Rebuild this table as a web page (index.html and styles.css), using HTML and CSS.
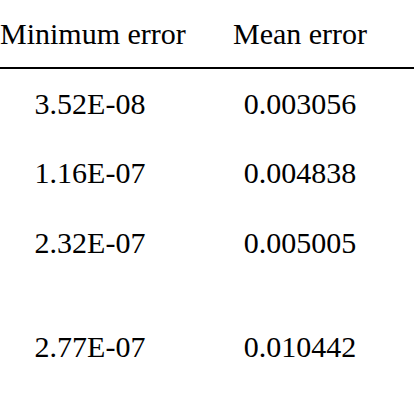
FILE: index.html
```html
<!DOCTYPE html>
<html lang="en">

<head>
    <meta charset="UTF-8">
    <meta name="viewport" content="width=device-width, initial-scale=1.0">
    <title>Error table</title>
    <link rel="stylesheet" href="styles.css">
</head>

<body>
    <div class="table">
        <div class="row head">
            <div class="cell">Minimum error</div>
            <div class="cell">Mean error</div>
        </div>
        <div class="row">
            <div class="cell">3.52E-08</div>
            <div class="cell">0.003056</div>
        </div>
        <div class="row">
            <div class="cell">1.16E-07</div>
            <div class="cell">0.004838</div>
        </div>
        <div class="row">
            <div class="cell">2.32E-07</div>
            <div class="cell">0.005005</div>
        </div>
        <div class="row tall">
            <div class="cell">2.77E-07</div>
            <div class="cell">0.010442</div>
        </div>
    </div>
</body>

</html>
```

FILE: styles.css
```css
body {
    margin: 0;
    background-color: #ffffff;
    color: #000000;
    font-family: "Liberation Serif", "Times New Roman", serif;
    font-size: 30px;
    overflow: hidden;
}

.table {
    width: 414px;
}

.row {
    display: grid;
    grid-template-columns: 180px 240px;
    align-items: center;
    height: 69.5px;
    line-height: 30px;
}

.cell {
    text-align: center;
    white-space: nowrap;
}

.head {
    height: auto;
    padding-top: 19px;
    padding-bottom: 18px;
    border-bottom: 2px solid #000000;
}

.tall {
    height: 139px;
}
```
